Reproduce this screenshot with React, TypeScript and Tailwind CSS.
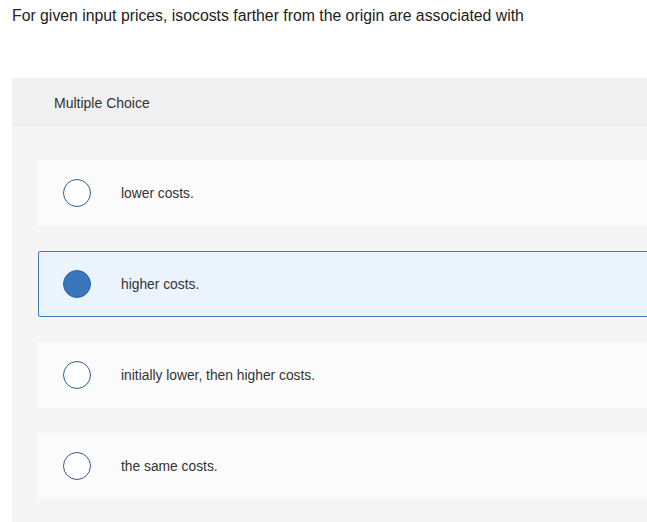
const options = [
  { label: "lower costs.", selected: false },
  { label: "higher costs.", selected: true },
  { label: "initially lower, then higher costs.", selected: false },
  { label: "the same costs.", selected: false },
];

function Radio({ selected }: { selected: boolean }) {
  return (
    <span
      className={
        selected
          ? "h-[28px] w-[28px] shrink-0 rounded-full border-[1.5px] border-[#2f62a0] bg-[#3a76bb]"
          : "h-[28px] w-[28px] shrink-0 rounded-full border-[1.5px] border-[#2f5f8f] bg-white"
      }
    />
  );
}

export default function App() {
  return (
    <div
      className="h-[522px] w-[647px] overflow-hidden bg-white text-[#222]"
      style={{ fontFamily: '"Liberation Sans", Arial, sans-serif' }}
    >
      <p className="pl-3 pt-[6px] text-[15.8px] leading-[20px]">
        For given input prices, isocosts farther from the origin are associated with
      </p>
      <div className="ml-3 mt-[52px] w-[720px] bg-[#f5f5f5] pb-6">
        <div className="flex h-[49px] items-center bg-[#f0f0f0] pl-[42px] pt-[2px] text-[14px] text-[#333]">
          Multiple Choice
        </div>
        <div className="flex flex-col gap-[25px] pl-[26px] pt-[33px]">
          {options.map((o) => (
            <div
              key={o.label}
              className={
                o.selected
                  ? "flex h-[66px] items-center rounded-[2px] border border-[#3a7bc8] bg-[#ebf3fc] pl-6"
                  : "flex h-[66px] items-center rounded-[2px] border border-transparent bg-[#fbfbfb] pl-6"
              }
            >
              <Radio selected={o.selected} />
              <span className="pl-[30px] pt-[3px] text-[13.8px] text-[#333]">{o.label}</span>
            </div>
          ))}
        </div>
      </div>
    </div>
  );
}
